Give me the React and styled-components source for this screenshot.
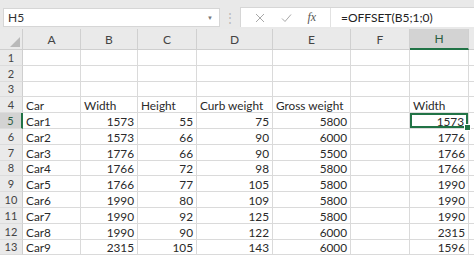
import React from 'react'
import styled, { createGlobalStyle } from 'styled-components'

const GlobalStyle = createGlobalStyle`
  html, body {
    margin: 0;
    padding: 0;
    background: #ffffff;
    overflow: hidden;
  }
  body {
    font-family: Lato, 'Open Sans', 'Liberation Sans', sans-serif;
  }
`

const GREEN = '#217346'
const GRID = '#dadada'

const COLUMNS = ['A', 'B', 'C', 'D', 'E', 'F', 'H']
const ACTIVE_COL = 'H'
const ACTIVE_ROW = 5

// rows of the sheet, index 0 is row 1
const rows = [
  [],
  [],
  [],
  ['Car', 'Width', 'Height', 'Curb weight', 'Gross weight', '', 'Width'],
  ['Car1', 1573, 55, 75, 5800, '', 1573],
  ['Car2', 1573, 66, 90, 6000, '', 1776],
  ['Car3', 1776, 66, 90, 5500, '', 1766],
  ['Car4', 1766, 72, 98, 5800, '', 1766],
  ['Car5', 1766, 77, 105, 5800, '', 1990],
  ['Car6', 1990, 80, 109, 5800, '', 1990],
  ['Car7', 1990, 92, 125, 5800, '', 1990],
  ['Car8', 1990, 90, 122, 6000, '', 2315],
  ['Car9', 2315, 105, 143, 6000, '', 1596]
]

const Window = styled.div`
  width: 474px;
  height: 258px;
  display: flex;
  flex-direction: column;
  background: #ffffff;
  overflow: hidden;
`

const FormulaBar = styled.div`
  height: 29px;
  flex: none;
  display: flex;
  align-items: flex-end;
  background: #e9e9e9;
  padding: 0 0 2px 3px;
  box-sizing: border-box;
`

const NameBox = styled.div`
  width: 217px;
  height: 19px;
  background: #ffffff;
  border: 1px solid #d6d6d6;
  box-sizing: border-box;
  display: flex;
  align-items: center;
  justify-content: space-between;
  padding: 0 6px 0 4px;
  font-size: 12px;
  color: #333;
`

const Caret = styled.span`
  font-size: 6px;
  color: #777;
`

const Dots = styled.div`
  width: 20px;
  height: 19px;
  display: flex;
  align-items: center;
  justify-content: center;
  color: #b8b8b8;
  font-size: 12px;
`

const InputArea = styled.div`
  flex: 1;
  height: 20px;
  background: #ffffff;
  border: 1px solid #d6d6d6;
  border-right: none;
  border-bottom: none;
  box-sizing: border-box;
  display: flex;
  align-items: center;
`

const Buttons = styled.div`
  width: 90px;
  height: 100%;
  display: flex;
  align-items: center;
  justify-content: space-around;
  padding: 0 6px;
  box-sizing: border-box;
  border-right: 1px solid #e2e2e2;
`

const Fx = styled.span`
  font-family: 'Liberation Serif', serif;
  font-style: italic;
  font-size: 12px;
  color: #555;
`

const Formula = styled.div`
  padding-left: 10px;
  font-size: 12px;
  color: #222;
`

const Sheet = styled.div`
  flex: 1;
  display: grid;
  grid-template-columns: 23px 58px 57px 59px 76px 78px 59px 59px 1fr;
  grid-template-rows: 21px repeat(13, 15.8px);
  font-size: 11.8px;
  color: #2a2a2a;
`

const Corner = styled.div`
  background: #eaeaea;
  border-right: 1px solid #cfcfcf;
  border-bottom: 1px solid #cfcfcf;
  box-sizing: border-box;
  display: flex;
  align-items: flex-end;
  justify-content: flex-end;
  padding: 0 2px 2px 0;
`

const ColHead = styled.div`
  background: ${p => (p.$active ? '#d3d3d3' : '#eaeaea')};
  color: ${p => (p.$active ? '#2b5e3f' : '#444')};
  border-right: 1px solid #d0d0d0;
  border-bottom: ${p => (p.$active ? `2px solid ${GREEN}` : '1px solid #cfcfcf')};
  box-sizing: border-box;
  display: flex;
  align-items: center;
  justify-content: center;
  font-size: 12px;
`

const RowHead = styled.div`
  background: ${p => (p.$active ? '#d3d3d3' : '#eaeaea')};
  color: ${p => (p.$active ? '#2b5e3f' : '#444')};
  border-right: ${p => (p.$active ? `2px solid ${GREEN}` : '1px solid #cfcfcf')};
  border-bottom: 1px solid #dcdcdc;
  box-sizing: border-box;
  display: flex;
  align-items: flex-end;
  justify-content: center;
  line-height: 14px;
  font-size: 11px;
`

const Cell = styled.div`
  position: relative;
  border-right: 1px solid ${GRID};
  border-bottom: 1px solid ${GRID};
  box-sizing: border-box;
  display: flex;
  align-items: flex-end;
  justify-content: ${p => (p.$num ? 'flex-end' : 'flex-start')};
  padding: 0 3px;
  line-height: 13px;
  white-space: nowrap;
  ${p => p.$selected && `
    box-shadow: inset 0 0 0 2px ${GREEN};
    padding-right: 4px;
  `}
`

const Handle = styled.span`
  position: absolute;
  right: -3px;
  bottom: -3px;
  width: 5px;
  height: 5px;
  background: ${GREEN};
  border: 1px solid #ffffff;
  z-index: 2;
`

const Cross = () => (
  <svg width='10' height='10' viewBox='0 0 10 10'>
    <path d='M1 1 L9 9 M9 1 L1 9' stroke='#a8a8a8' strokeWidth='1' fill='none' />
  </svg>
)

const Check = () => (
  <svg width='11' height='10' viewBox='0 0 11 10'>
    <path d='M1 5.5 L4 8.5 L10 1.5' stroke='#a8a8a8' strokeWidth='1' fill='none' />
  </svg>
)

const CornerMark = () => (
  <svg width='10' height='10' viewBox='0 0 10 10'>
    <polygon points='10,0 10,10 0,10' fill='#b9b9b9' />
  </svg>
)

export default function App () {
  return (
    <Window>
      <GlobalStyle />
      <FormulaBar>
        <NameBox>
          <span>H5</span>
          <Caret>▼</Caret>
        </NameBox>
        <Dots>⋮</Dots>
        <InputArea>
          <Buttons>
            <Cross />
            <Check />
            <Fx>fx</Fx>
          </Buttons>
          <Formula>=OFFSET(B5;1;0)</Formula>
        </InputArea>
      </FormulaBar>
      <Sheet>
        <Corner><CornerMark /></Corner>
        {COLUMNS.map(c => (
          <ColHead key={c} $active={c === ACTIVE_COL}>{c}</ColHead>
        ))}
        <ColHead />
        {rows.map((row, r) => {
          const rowNo = r + 1
          return (
            <React.Fragment key={rowNo}>
              <RowHead $active={rowNo === ACTIVE_ROW}>{rowNo}</RowHead>
              {COLUMNS.map((c, i) => {
                const v = row[i]
                const selected = c === ACTIVE_COL && rowNo === ACTIVE_ROW
                return (
                  <Cell key={c} $num={typeof v === 'number'} $selected={selected}>
                    {v}
                    {selected && <Handle />}
                  </Cell>
                )
              })}
              <Cell />
            </React.Fragment>
          )
        })}
      </Sheet>
    </Window>
  )
}
